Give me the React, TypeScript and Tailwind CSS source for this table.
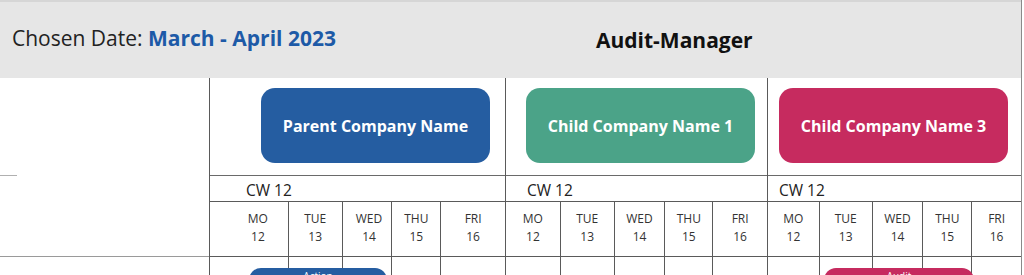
import React from 'react';

// Audit planner header: chosen period, company pills, calendar week grid

interface Week {
  company: string;
  pillClass: string;
  pillOffset: string;
  cwOffset: string;
  width: string;
  dayWidths: number[];
  dayPad?: number[];
  event?: { left: number; width: number; color: string; label: string };
}

const DAYS = [
  { name: 'MO', date: 12 },
  { name: 'TUE', date: 13 },
  { name: 'WED', date: 14 },
  { name: 'THU', date: 15 },
  { name: 'FRI', date: 16 },
];

const WEEKS: Week[] = [
  {
    company: 'Parent Company Name',
    pillClass: 'bg-[#255da1]',
    pillOffset: 'pl-[51px]',
    cwOffset: 'pl-[36px]',
    width: 'w-[296px]',
    dayWidths: [78, 54, 50, 49, 65],
    dayPad: [18, 0, 4, 0, 0],
    event: { left: 39, width: 138, color: 'bg-[#255da1]', label: 'Action' },
  },
  {
    company: 'Child Company Name 1',
    pillClass: 'bg-[#4ba388]',
    pillOffset: 'pl-[20px]',
    cwOffset: 'pl-[21px]',
    width: 'w-[262px]',
    dayWidths: [54, 54, 51, 48, 55],
  },
  {
    company: 'Child Company Name 3',
    pillClass: 'bg-[#c62b5f]',
    pillOffset: 'pl-[11px]',
    cwOffset: 'pl-[11px]',
    width: 'w-[254px]',
    dayWidths: [51, 53, 51, 49, 50],
    event: { left: 56, width: 150, color: 'bg-[#c62b5f]', label: 'Audit' },
  },
];

function WeekColumn({ week }: { week: Week }) {
  return (
    <div className={`${week.width} flex flex-col border-l border-[#5a5a5a]`}>
      {/* company pill */}
      <div className={`h-[97px] pt-[10px] ${week.pillOffset}`}>
        <div
          className={`w-[229px] h-[75px] rounded-[14px] ${week.pillClass} flex items-center justify-center text-white text-[16px] font-bold`}
        >
          {week.company}
        </div>
      </div>

      {/* calendar week */}
      <div className="h-[26px] border-t border-[#6a6a6a] flex items-center">
        <span className={`${week.cwOffset} pt-[4px] text-[15.5px] text-[#222] leading-none`}>CW 12</span>
      </div>

      {/* days */}
      <div className="h-[56px] flex border-t border-b border-[#5a5a5a]">
        {DAYS.map((d, i) => (
          <div
            key={d.name}
            className={`flex flex-col items-center pt-[8px] text-[12px] leading-[18px] text-[#333] ${i > 0 ? 'border-l border-[#5a5a5a]' : ''}`}
            style={{ width: week.dayWidths[i], paddingLeft: week.dayPad ? week.dayPad[i] : 0 }}
          >
            <span>{d.name}</span>
            <span>{d.date}</span>
          </div>
        ))}
      </div>

      {/* event row */}
      <div className="relative flex flex-1">
        {DAYS.map((d, i) => (
          <div
            key={d.name}
            className={`h-full ${i > 0 ? 'border-l border-[#5a5a5a]' : ''}`}
            style={{ width: week.dayWidths[i] }}
          />
        ))}
        {week.event && (
          <div
            className={`absolute top-[11px] h-[30px] rounded-t-[12px] ${week.event.color} text-white text-[10px] text-center pt-[1px]`}
            style={{ left: week.event.left, width: week.event.width }}
          >
            {week.event.label}
          </div>
        )}
      </div>
    </div>
  );
}

export default function App() {
  return (
    <div className="w-[1024px] h-[275px] overflow-hidden bg-white font-['Open_Sans','Noto_Sans',sans-serif]">
      <div className="w-[1022px] h-full flex flex-col border-r border-[#8a8a8a]">
        {/* header */}
        <div className="h-[78px] shrink-0 bg-[#e6e6e6] border-t-2 border-[#d6d6d6] flex items-center">
          <div className="w-[596px] pl-[12px] text-[21px] text-[#222] pb-[2px]">
            Chosen Date: <span className="font-bold text-[#1d5aa7]">March - April 2023</span>
          </div>
          <div className="text-[21px] font-bold text-[#111] pt-[2px]">Audit-Manager</div>
        </div>

        {/* grid */}
        <div className="flex flex-1">
          <div className="w-[209px] flex flex-col">
            <div className="h-[97px]" />
            <div className="h-[82px] border-b border-[#9a9a9a]">
              <div className="w-[17px] border-t border-[#b0b0b0]" />
            </div>
            <div className="flex-1" />
          </div>
          {WEEKS.map((w) => (
            <WeekColumn key={w.company} week={w} />
          ))}
        </div>
      </div>
    </div>
  );
}
